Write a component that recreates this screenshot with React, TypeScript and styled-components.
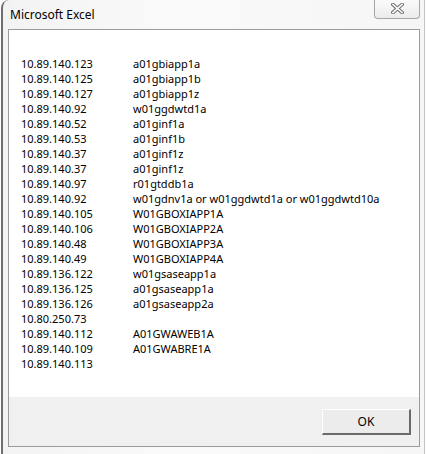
import React from "react";
import styled, { createGlobalStyle } from "styled-components";

const Global = createGlobalStyle`
  html, body { margin: 0; padding: 0; background: #ffffff; }
  body { font-family: "Noto Sans", "Open Sans", sans-serif; }
  #root { width: 427px; height: 454px; overflow: hidden; }
`;

const Window = styled.div`
  margin-left: 1px;
  width: 421px;
  height: 454px;
  border-left: 2px solid #6f6f6f;
  border-right: 1px solid #c4c4c4;
  border-top-left-radius: 8px;
  background: linear-gradient(90deg, #f3f3f3 0%, #fafafa 40%, #f6f6f6 100%);
  display: flex;
  flex-direction: column;
  box-sizing: content-box;
`;

const TitleBar = styled.div`
  height: 29px;
  display: flex;
  align-items: flex-start;
  justify-content: space-between;
  padding-left: 7px;
  padding-right: 4px;
`;

const Title = styled.span`
  font-size: 12px;
  line-height: 16px;
  margin-top: 7px;
  color: #000;
`;

const CloseButton = styled.div`
  width: 44px;
  height: 19px;
  margin-top: -1px;
  border: 1px solid #a7a7a7;
  border-top: none;
  border-radius: 0 0 4px 4px;
  background: linear-gradient(#fbfbfb, #ececec);
  display: flex;
  align-items: center;
  justify-content: center;
`;

const Panel = styled.div`
  margin: 0 4px 0 5px;
  height: 416px;
  border: 1px solid #9b9b9b;
  display: flex;
  flex-direction: column;
`;

const Content = styled.div`
  flex: 1;
  background: #ffffff;
  padding: 26px 0 0 12px;
`;

const Row = styled.div`
  display: grid;
  grid-template-columns: 112px auto;
  font-size: 11px;
  line-height: 15px;
  color: #000;
  white-space: nowrap;
`;

const Footer = styled.div`
  height: 49px;
  background: #f0f0f0;
  display: flex;
  justify-content: flex-end;
  align-items: flex-start;
  padding-right: 8px;
`;

const OkButton = styled.button`
  margin-top: 12px;
  width: 89px;
  height: 26px;
  box-sizing: border-box;
  border-style: solid;
  border-width: 1px 2px 2px 1px;
  border-color: #ffffff #6a6a6a #6a6a6a #ffffff;
  background: #ececec;
  font-family: "Noto Sans", "Open Sans", sans-serif;
  font-size: 12px;
  color: #000;
  padding: 0;
`;

const rows: [string, string][] = [
  ["10.89.140.123", "a01gbiapp1a"],
  ["10.89.140.125", "a01gbiapp1b"],
  ["10.89.140.127", "a01gbiapp1z"],
  ["10.89.140.92", "w01ggdwtd1a"],
  ["10.89.140.52", "a01ginf1a"],
  ["10.89.140.53", "a01ginf1b"],
  ["10.89.140.37", "a01ginf1z"],
  ["10.89.140.37", "a01ginf1z"],
  ["10.89.140.97", "r01gtddb1a"],
  ["10.89.140.92", "w01gdnv1a or w01ggdwtd1a or w01ggdwtd10a"],
  ["10.89.140.105", "W01GBOXIAPP1A"],
  ["10.89.140.106", "W01GBOXIAPP2A"],
  ["10.89.140.48", "W01GBOXIAPP3A"],
  ["10.89.140.49", "W01GBOXIAPP4A"],
  ["10.89.136.122", "w01gsaseapp1a"],
  ["10.89.136.125", "a01gsaseapp1a"],
  ["10.89.136.126", "a01gsaseapp2a"],
  ["10.80.250.73", ""],
  ["10.89.140.112", "A01GWAWEB1A"],
  ["10.89.140.109", "A01GWABRE1A"],
  ["10.89.140.113", ""],
];

const CloseIcon = () => (
  <svg width="13" height="11" viewBox="0 0 13 11">
    <path d="M2 1.5 L11 9.5 M11 1.5 L2 9.5" stroke="#6f6f6f" strokeWidth="3.6" strokeLinecap="square" fill="none" />
    <path d="M2 1.5 L11 9.5 M11 1.5 L2 9.5" stroke="#ffffff" strokeWidth="1.6" strokeLinecap="square" fill="none" />
  </svg>
);

export default function App() {
  return (
    <>
      <Global />
      <Window>
        <TitleBar>
          <Title>Microsoft Excel</Title>
          <CloseButton>
            <CloseIcon />
          </CloseButton>
        </TitleBar>
        <Panel>
          <Content>
            {rows.map(([ip, name], i) => (
              <Row key={i}>
                <span>{ip}</span>
                <span>{name}</span>
              </Row>
            ))}
          </Content>
          <Footer>
            <OkButton>OK</OkButton>
          </Footer>
        </Panel>
      </Window>
    </>
  );
}
